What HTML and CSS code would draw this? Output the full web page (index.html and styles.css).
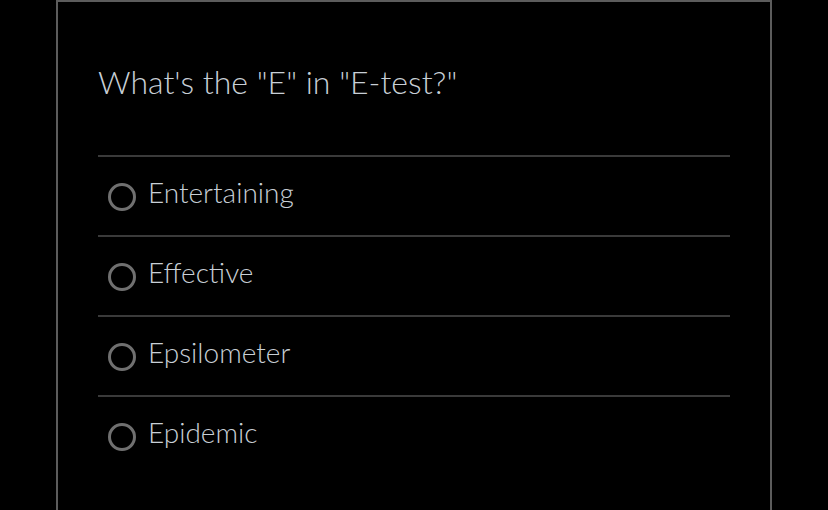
FILE: index.html
```html
<!DOCTYPE html>
<html lang="en">
<head>
    <meta charset="UTF-8">
    <meta name="viewport" content="width=device-width, initial-scale=1.0">
    <title>E-test Quiz</title>
    <link rel="stylesheet" href="styles.css">
</head>
<body>
    <div class="card">
        <h1 class="question">What's the "E" in "E-test?"</h1>
        <form class="options">
            <label class="option">
                <input type="radio" name="answer" value="entertaining">
                <span>Entertaining</span>
            </label>
            <label class="option">
                <input type="radio" name="answer" value="effective">
                <span>Effective</span>
            </label>
            <label class="option">
                <input type="radio" name="answer" value="epsilometer">
                <span>Epsilometer</span>
            </label>
            <label class="option">
                <input type="radio" name="answer" value="epidemic">
                <span>Epidemic</span>
            </label>
        </form>
    </div>
</body>
</html>
```

FILE: styles.css
```css
body {
    font-family: Lato, "Open Sans", sans-serif;
    font-weight: 300;
    background-color: #000;
    color: #c8cfd6;
    margin: 0;
    padding: 0;
}
.card {
    margin-left: 56px;
    width: 632px;
    height: 520px;
    padding: 0 40px;
    border: 2px solid #5c5c5c;
    border-bottom: none;
}
.question {
    font-size: 32px;
    font-weight: 300;
    margin: 0;
    padding-top: 62px;
    height: 91px;
    line-height: 36px;
}
.options {
    margin: 0;
}
.option {
    display: flex;
    align-items: center;
    height: 78px;
    border-top: 2px solid #3a3a3a;
    font-size: 28px;
    cursor: pointer;
}
.option span {
    padding-bottom: 8px;
}
.option input {
    appearance: none;
    -webkit-appearance: none;
    width: 28px;
    height: 28px;
    margin: 1px 12px 0 10px;
    border: 3px solid #707070;
    border-radius: 50%;
    box-sizing: border-box;
}
.option input:checked {
    background: radial-gradient(#c8cfd6 40%, transparent 45%);
}
```
